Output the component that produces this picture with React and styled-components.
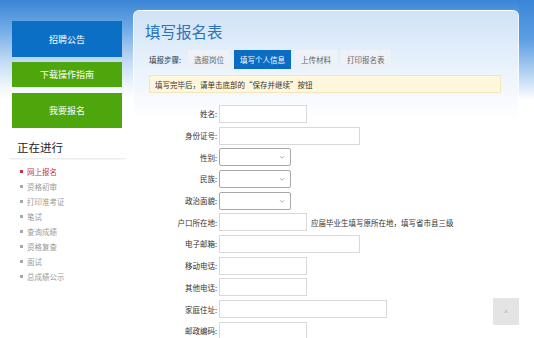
import React from 'react'
import styled, { createGlobalStyle, css } from 'styled-components'

const GlobalStyle = createGlobalStyle`
  html, body {
    margin: 0;
    padding: 0;
    background: #fff;
  }
  body {
    font-family: "Noto Sans CJK SC", "Noto Sans", sans-serif;
    color: #333;
  }
`

const steps = ['选报岗位', '填写个人信息', '上传材料', '打印报名表']
const progress = ['网上报名', '资格初审', '打印准考证', '笔试', '查询成绩', '资格复查', '面试', '总成绩公示']

const fields = [
  { label: '姓名', type: 'input', width: 88 },
  { label: '身份证号', type: 'input', width: 141 },
  { label: '性别', type: 'select' },
  { label: '民族', type: 'select' },
  { label: '政治面貌', type: 'select' },
  { label: '户口所在地', type: 'input', width: 88, note: '应届毕业生填写原所在地，填写省市县三级' },
  { label: '电子邮箱', type: 'input', width: 141 },
  { label: '移动电话', type: 'input', width: 88 },
  { label: '其他电话', type: 'input', width: 88 },
  { label: '家庭住址', type: 'input', width: 168 },
  { label: '邮政编码', type: 'input', width: 88 },
]

const App = () => {
  return (
    <>
      <GlobalStyle />
      <Page>
        <Sidebar>
          <NavButton $color="blue" $height={36}>招聘公告</NavButton>
          <NavButton $color="green" $height={25}>下载操作指南</NavButton>
          <NavButton $color="green" $height={35}>我要报名</NavButton>
          <SideHeading>正在进行</SideHeading>
          <ProgressList>
            {progress.map((p, i) => (
              <ProgressItem key={p} $active={i === 0}>{p}</ProgressItem>
            ))}
          </ProgressList>
        </Sidebar>

        <Panel>
          <Title>填写报名表</Title>
          <Steps>
            <StepsLabel>填报步骤:</StepsLabel>
            {steps.map((s, i) => (
              <StepTab key={s} $active={i === 1}>{s}</StepTab>
            ))}
          </Steps>
          <Tip>填写完毕后，请单击底部的“保存并继续”按钮</Tip>
          <Form>
            {fields.map((f) => (
              <Row key={f.label}>
                <Label>{f.label}:</Label>
                <Field>
                  {f.type === 'select' ? (
                    <Select>
                      <Chevron viewBox="0 0 8 8">
                        <path d="M2 3.2 L4 5.2 L6 3.2" fill="none" stroke="#999" strokeWidth="0.8" />
                      </Chevron>
                    </Select>
                  ) : (
                    <Input style={{ width: f.width }} />
                  )}
                  {f.note && <Note>{f.note}</Note>}
                </Field>
              </Row>
            ))}
          </Form>
        </Panel>
        <RightEdge />
      </Page>
      <ToTop>^</ToTop>
    </>
  )
}

const Page = styled.div`
  display: flex;
  align-items: flex-start;
  width: 534px;
  height: 338px;
  overflow: hidden;
  background: linear-gradient(180deg, #3a85d7 0px, #72ace7 30px, #c4dcf4 62px, #eef5fc 85px, #ffffff 100px);
`

const Sidebar = styled.div`
  display: flex;
  flex-direction: column;
  width: 110px;
  padding: 21px 0 0 12px;
  flex-shrink: 0;
`

const NavButton = styled.div`
  display: flex;
  align-items: center;
  justify-content: center;
  height: ${({ $height }) => $height}px;
  margin-bottom: 5px;
  color: #fff;
  font-size: 9px;
  ${({ $color }) =>
    $color === 'blue'
      ? css`background: #0b6fc6;`
      : css`background: #4da70c;`}
  &:nth-child(2) {
    margin-bottom: 6px;
  }
`

const SideHeading = styled.div`
  margin: 3px -3px 0 -2px;
  padding: 4px 0 4px 7px;
  font-size: 11.5px;
  line-height: 14px;
  color: #222;
  border-bottom: 1px solid #ececec;
  box-shadow: 0 1px 1px rgba(0, 0, 0, 0.03);
`

const ProgressList = styled.ul`
  list-style: none;
  margin: 5px 0 0 0;
  padding: 0 0 0 8px;
`

const ProgressItem = styled.li`
  display: flex;
  align-items: center;
  gap: 4px;
  height: 15px;
  font-size: 7.5px;
  color: ${({ $active }) => ($active ? '#c2363c' : '#9a9a9a')};
  &::before {
    content: '';
    width: 3px;
    height: 3px;
    background: ${({ $active }) => ($active ? '#c2363c' : '#a8a8a8')};
  }
`

const Panel = styled.div`
  width: 386px;
  height: 340px;
  margin: 10px 0 0 11px;
  padding: 10px 17px 0 12px;
  box-sizing: border-box;
  flex-shrink: 0;
  border-radius: 6px 6px 0 0;
  border: 1px solid rgba(255, 255, 255, 0.7);
  background: linear-gradient(180deg, #cfe2f6 0px, #e2eefa 40px, #f4f8fd 80px, #ffffff 110px);
`

const Title = styled.div`
  font-size: 15.5px;
  line-height: 20px;
  color: #2d72b8;
  margin-left: -1px;
`

const Steps = styled.div`
  display: flex;
  align-items: center;
  gap: 4px;
  margin: 9px 0 0 3px;
  height: 19px;
`

const StepsLabel = styled.span`
  font-size: 7.5px;
  color: #333;
  margin-right: 3px;
`

const StepTab = styled.span`
  display: flex;
  align-items: center;
  height: 19px;
  padding: 0 6px;
  font-size: 7.5px;
  color: #666;
  background: #edf2f8;
  ${({ $active }) =>
    $active &&
    css`
      background: #0b6cc4;
      color: #fff;
    `}
`

const Tip = styled.div`
  margin: 6px 0 0 3px;
  height: 18px;
  display: flex;
  align-items: center;
  padding-left: 5px;
  font-size: 7.5px;
  color: #333;
  background: #fff7dc;
  border: 1px solid #f3e6bd;
  box-sizing: border-box;
`

const Form = styled.div`
  display: flex;
  flex-direction: column;
  margin: 10px 0 0 3px;
`

const Row = styled.div`
  display: flex;
  align-items: center;
  height: 21.7px;
`

const Label = styled.div`
  width: 68px;
  text-align: right;
  font-size: 7.5px;
  color: #333;
  margin-right: 2px;
`

const Field = styled.div`
  display: flex;
  align-items: center;
  gap: 4px;
`

const Input = styled.div`
  height: 18px;
  box-sizing: border-box;
  border: 1px solid #d9d9d9;
  background: #fff;
`

const Select = styled.div`
  position: relative;
  width: 72px;
  height: 18px;
  box-sizing: border-box;
  border: 1px solid #a8a8a8;
  border-radius: 2px;
  background: #fff;
`

const Chevron = styled.svg`
  position: absolute;
  right: 4px;
  top: 4px;
  width: 8px;
  height: 8px;
`

const Note = styled.span`
  font-size: 7.5px;
  color: #333;
`

const RightEdge = styled.div`
  flex: 1;
  align-self: stretch;
  background: linear-gradient(180deg, #3a85d7 0px, #5e9fe3 40px, #b8d5f2 75px, #ffffff 100px);
`

const ToTop = styled.div`
  position: fixed;
  left: 493px;
  top: 298px;
  width: 26px;
  height: 27px;
  display: flex;
  align-items: center;
  justify-content: center;
  background: #e4e4e4;
  color: #aaa;
  font-size: 7px;
`

export default App
